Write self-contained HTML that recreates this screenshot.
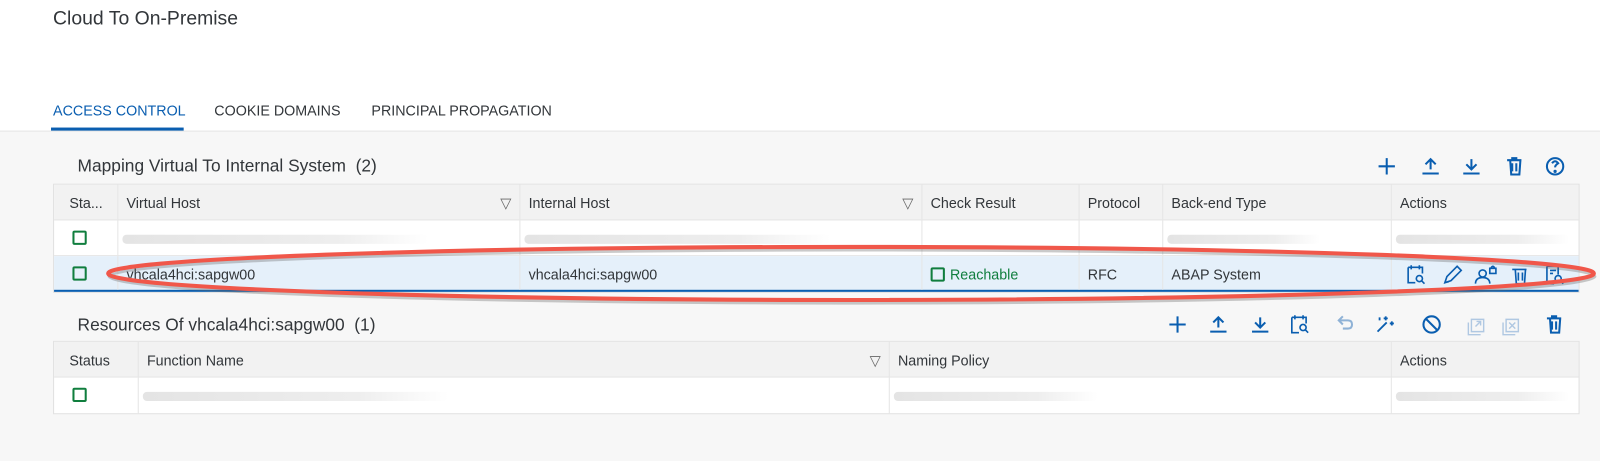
<!DOCTYPE html>
<html><head><meta charset="utf-8"><style>
*{margin:0;padding:0;box-sizing:border-box}
body{width:1600px;height:461px;background:#f7f7f7;font-family:"Liberation Sans",sans-serif;color:#32363a;position:relative;overflow:hidden}
#w{position:absolute;left:0;top:0;width:1568px;height:452px;transform:scale(1.0204);transform-origin:0 0}
.hdr{position:absolute;left:0;top:0;width:1568px;height:129px;background:#fff;border-bottom:1px solid #e5e5e5}
.t{position:absolute;white-space:nowrap}
.tab{position:absolute;top:100px;font-size:14px;color:#32363a}
.tbl{position:absolute;left:52px;width:1496px;border:1px solid #e0e0e0;background:#fff}
.row{position:relative;height:35px;border-bottom:1px solid #e5e5e5;font-size:14px}
.head{background:#f2f2f2;color:#32363a}
.c{position:absolute;top:0;height:100%;border-left:1px solid #e5e5e5;padding:10px 8px;white-space:nowrap}
.cb{position:absolute;width:14px;height:14px;border:2px solid #107e3e;border-radius:2px;top:10px}
.blur{position:absolute;top:14px;height:9px;background:linear-gradient(90deg,#e4e4e4,#eeeeee 70%,rgba(240,240,240,0));border-radius:4px}
</style></head><body><div id="w">
<div class="hdr">
<div class="t" style="left:52px;top:8px;font-size:19px;color:#32363a">Cloud To On-Premise</div>
<div class="tab" style="left:52px;color:#0a5eb0">ACCESS CONTROL</div>
<div style="position:absolute;left:50px;top:125px;width:130px;height:3px;background:#0a5eb0"></div>
<div class="tab" style="left:210px">COOKIE DOMAINS</div>
<div class="tab" style="left:364px">PRINCIPAL PROPAGATION</div>
</div>
<div class="t" style="left:76px;top:153px;font-size:17px">Mapping Virtual To Internal System&nbsp; (2)</div>
<svg style="position:absolute;left:1345px;top:150px" width="190" height="26" fill="none" stroke="#0a5eb0" stroke-width="2">
<path d="M14 5v16M6 13h16"/><path d="M57 6v10M52 11l5-5 5 5M49 20h16"/><path d="M97 6v10M92 11l5 5 5-5M89 20h16"/>
<path d="M132 7h14M135 7l1 14h8l1-14M137 10v8M141 10v8M136 5h6"/><circle cx="179" cy="13" r="8"/><path d="M176 10q3-4 6 0-3 2-3 4"/><circle cx="179" cy="18" r=".6" fill="#0a5eb0"/>
</svg>
<div class="tbl" style="top:180px">
<div class="row head"><div class="c" style="left:0;border:0;padding-left:15px">Sta...</div><div class="c" style="left:62px;width:394px">Virtual Host<span style="position:absolute;right:8px;color:#666">▽</span></div><div class="c" style="left:456px;width:394px">Internal Host<span style="position:absolute;right:8px;color:#666">▽</span></div><div class="c" style="left:850px">Check Result</div><div class="c" style="left:1004px">Protocol</div><div class="c" style="left:1086px">Back-end Type</div><div class="c" style="left:1310px">Actions</div></div>
<div class="row"><div class="cb" style="left:18px"></div><div class="c" style="left:62px;width:394px"><div class="blur" style="left:4px;width:300px"></div></div><div class="c" style="left:456px;width:394px"><div class="blur" style="left:4px;width:300px"></div></div><div class="c" style="left:850px;width:154px"></div><div class="c" style="left:1004px;width:82px"></div><div class="c" style="left:1086px;width:224px"><div class="blur" style="left:4px;width:150px"></div></div><div class="c" style="left:1310px;width:186px"><div class="blur" style="left:4px;width:170px"></div></div></div>
<div class="row" style="background:#e5f0fa;border-bottom:2px solid #0a5eb0"><div class="cb" style="left:18px"></div><div class="c" style="left:62px">vhcala4hci:sapgw00</div><div class="c" style="left:456px">vhcala4hci:sapgw00</div><div class="c" style="left:850px;color:#107e3e"><span style="display:inline-block;width:14px;height:14px;border:2px solid #107e3e;border-radius:2px;vertical-align:-2px;margin-right:5px"></span>Reachable</div><div class="c" style="left:1004px">RFC</div><div class="c" style="left:1086px">ABAP System</div><div class="c" style="left:1310px;width:186px">
<svg style="position:absolute;left:14px;top:7px" width="160" height="22" fill="none" stroke="#0a5eb0" stroke-width="1.6"><path d="M2 4h14v6M2 4v15h7M5 2v4M13 2v4"/><circle cx="13" cy="15" r="3"/><path d="M15 17l3 3"/><path d="M38 19l2-6 10-10 4 4-10 10zM38 19l4-1"/><circle cx="75" cy="10" r="3.5"/><path d="M68 20q0-6 7-6t7 6M82 5h6v5h-6zM83 5q2-4 4 0"/><path d="M104 6h14M107 6l1 14h8l1-14M110 9v8M114 9v8"/><path d="M138 3h11v8M138 3v17h7M141 7h6M141 10h3"/><circle cx="149" cy="15" r="3"/><path d="M151 17l3 3"/></svg></div></div>
</div>
<div class="t" style="left:76px;top:309px;font-size:17px">Resources Of vhcala4hci:sapgw00&nbsp; (1)</div>
<svg style="position:absolute;left:1140px;top:305px" width="400" height="26" fill="none" stroke="#0a5eb0" stroke-width="2">
<path d="M14 5v16M6 13h16"/><path d="M54 6v10M49 11l5-5 5 5M46 20h16"/><path d="M95 6v10M90 11l5 5 5-5M87 20h16"/>
<path d="M126 6h14v6M126 6v15h7M129 4v4M137 4v4" stroke-width="1.6"/><circle cx="137" cy="16" r="3" stroke-width="1.6"/><path d="M139 18l3 3" stroke-width="1.6"/>
<path d="M172 9h9q4 0 4 4t-4 4h-5M176 5l-4 4 4 4" stroke="#8fb2d6"/><path d="M210 20l9-9M218 5v4M216 7h4M224 10v4M222 12h4M212 6v3" stroke-width="1.8"/>
<circle cx="263" cy="13" r="8"/><path d="M257 7l12 12"/><path d="M302 8h12v12h-12zM299 11v12h12M306 15l5-5M307 10h4v4" stroke="#b0c8e2" stroke-width="1.4"/><path d="M336 8h12v12h-12zM333 11v12h12M339 11l6 6M345 11l-6 6" stroke="#b0c8e2" stroke-width="1.4"/>
<path d="M376 7h14M379 7l1 14h8l1-14M381 10v8M385 10v8M380 5h6"/>
</svg>
<div class="tbl" style="top:334px">
<div class="row head"><div class="c" style="left:0;border:0;padding-left:15px">Status</div><div class="c" style="left:82px;width:736px">Function Name<span style="position:absolute;right:8px;color:#666">▽</span></div><div class="c" style="left:818px">Naming Policy</div><div class="c" style="left:1310px">Actions</div></div>
<div class="row" style="border-bottom:0"><div class="cb" style="left:18px"></div><div class="c" style="left:82px;width:736px"><div class="blur" style="left:4px;width:300px"></div></div><div class="c" style="left:818px;width:492px"><div class="blur" style="left:4px;width:200px"></div></div><div class="c" style="left:1310px;width:186px"><div class="blur" style="left:4px;width:170px"></div></div></div>
</div>
<svg style="position:absolute;left:0;top:0" width="1568" height="452"><ellipse cx="835" cy="271" rx="728" ry="26" fill="none" stroke="#666" stroke-width="3" opacity=".35"/><ellipse cx="834" cy="268" rx="728" ry="26" fill="none" stroke="#f0574a" stroke-width="4"/></svg>
</div></body></html>
